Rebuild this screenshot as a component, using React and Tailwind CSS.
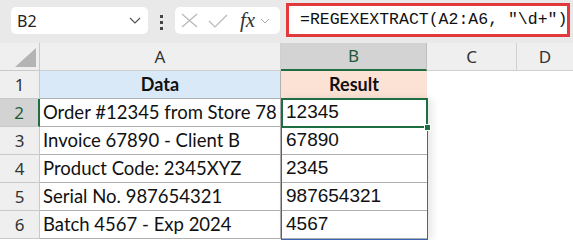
export default function App() {
  const rows = [
    ["Order #12345 from Store 78", "12345"],
    ["Invoice 67890 - Client B", "67890"],
    ["Product Code: 2345XYZ", "2345"],
    ["Serial No. 987654321", "987654321"],
    ["Batch 4567 - Exp 2024", "4567"],
  ];
  const ui = { fontFamily: '"Noto Sans", "Liberation Sans", sans-serif' };
  const cellFont = { fontFamily: 'Lato, "Noto Sans", sans-serif' };
  return (
    <div className="w-[573px] h-[240px] overflow-hidden bg-white relative" style={ui}>
      {/* toolbar */}
      <div className="h-[43px] bg-[#e9e9e9] flex items-start">
        <div className="ml-[11px] mt-[7px] w-[137px] h-[27px] bg-white rounded-[5px] flex items-center justify-between pl-[6px] pr-[7px]">
          <span className="text-[16px] text-[#222] leading-none">B2</span>
          <svg width="12" height="7" viewBox="0 0 12 7" fill="none" stroke="#555" strokeWidth="1.2">
            <path d="M1 1l5 5 5-5" />
          </svg>
        </div>
        <div className="w-[27px] h-[43px] flex flex-col items-center justify-center gap-[3px] pt-[1px]">
          <div className="w-[3px] h-[3px] bg-[#444]" />
          <div className="w-[3px] h-[3px] bg-[#444]" />
          <div className="w-[3px] h-[3px] bg-[#444]" />
        </div>
        <div className="mt-[7px] w-[105px] h-[27px] bg-white rounded-[5px] flex items-center pl-[6px]">
          <svg width="17" height="15" viewBox="0 0 17 15" fill="none" stroke="#b8b8b8" strokeWidth="1.2">
            <path d="M1 1l15 13M16 1L1 14" />
          </svg>
          <svg className="ml-[10px]" width="20" height="14" viewBox="0 0 20 14" fill="none" stroke="#b8b8b8" strokeWidth="1.2">
            <path d="M1 7l6 6L19 1" />
          </svg>
          <span className="ml-[12px] text-[21px] italic text-[#333] leading-none" style={{ fontFamily: '"Liberation Serif", serif' }}>
            fx
          </span>
          <svg className="ml-[5px]" width="10" height="6" viewBox="0 0 10 6" fill="none" stroke="#aaa" strokeWidth="1">
            <path d="M1 1l4 4 4-4" />
          </svg>
        </div>
        <div className="ml-[6px] mt-[3px] w-[284px] h-[34px] border-[3px] border-[#e2393d] bg-white flex items-center pl-[11px]">
          <span className="text-[16.5px] text-[#111] whitespace-nowrap leading-none" style={{ fontFamily: '"Liberation Mono", monospace' }}>
            =REGEXEXTRACT(A2:A6, "\d+")
          </span>
        </div>
      </div>

      {/* grid */}
      <div className="grid grid-cols-[40px_241px_146px_90px_56px] auto-rows-[28px]">
        {/* header row */}
        <div className="bg-[#efefef] border-r border-b border-[#c9c9c9] relative flex items-end justify-end pr-[3px] pb-[3px]">
          <svg width="21" height="19" viewBox="0 0 21 19">
            <path d="M21 0V19H0Z" fill="#b4b4b4" />
          </svg>
        </div>
        <div className="bg-[#efefef] border-r border-b border-[#d0d0d0] flex items-center justify-center text-[17px] text-[#333]">A</div>
        <div className="bg-[#d3d3d3] border-r border-[#c0c0c0] border-b-2 border-b-[#1f6e43] flex items-center justify-center text-[17px] text-[#1f5a38]">B</div>
        <div className="bg-[#efefef] border-r border-b border-[#d0d0d0] flex items-center justify-center text-[17px] text-[#333]">C</div>
        <div className="bg-[#efefef] border-b border-[#d0d0d0] flex items-center justify-center text-[17px] text-[#333]">D</div>

        {/* row 1 */}
        <div className="bg-[#efefef] border-r border-b border-[#c9c9c9] flex items-center justify-center text-[17px] text-[#333]">1</div>
        <div className="bg-[#dae9f8] border-r border-b border-[#b0b0b0] flex items-center justify-center text-[18px] font-bold text-[#111]" style={cellFont}>Data</div>
        <div className="bg-[#fbe2d5] border-b border-[#b0b0b0] flex items-center justify-center text-[18px] font-bold text-[#111]" style={cellFont}>Result</div>
        <div />
        <div />

        {rows.map(([a, b], i) => (
          <Row key={i} n={i + 2} a={a} b={b} selected={i === 0} cellFont={cellFont} />
        ))}
      </div>

      {/* spill range outline */}
      <div className="absolute left-[281px] top-[99px] w-[147px] h-[141px] border border-[#3b63b5] shadow-[4px_0_8px_rgba(0,0,0,0.10)] pointer-events-none" />
      {/* active cell */}
      <div className="absolute left-[281px] top-[98px] w-[147px] h-[30px] border-2 border-[#1f6e43] pointer-events-none" />
      <div className="absolute left-[424px] top-[124px] w-[7px] h-[7px] bg-[#1f6e43] border border-white pointer-events-none" />
    </div>
  );
}

function Row({ n, a, b, selected, cellFont }) {
  return (
    <>
      <div
        className={
          selected
            ? "bg-[#d3d3d3] border-r-2 border-r-[#1f6e43] border-b border-b-[#c9c9c9] flex items-center justify-center text-[17px] text-[#1f5a38]"
            : "bg-[#efefef] border-r border-b border-[#c9c9c9] flex items-center justify-center text-[17px] text-[#333]"
        }
      >
        {n}
      </div>
      <div className="border-r border-b border-[#b0b0b0] flex items-center pl-[3px] text-[18.5px] text-[#111] whitespace-nowrap overflow-hidden" style={cellFont}>
        {a}
      </div>
      <div className="border-b border-[#b0b0b0] flex items-center pl-[5px] text-[19px] text-[#111]" style={{ fontFamily: '"Liberation Sans", Arial, sans-serif' }}>
        {b}
      </div>
      <div />
      <div />
    </>
  );
}
